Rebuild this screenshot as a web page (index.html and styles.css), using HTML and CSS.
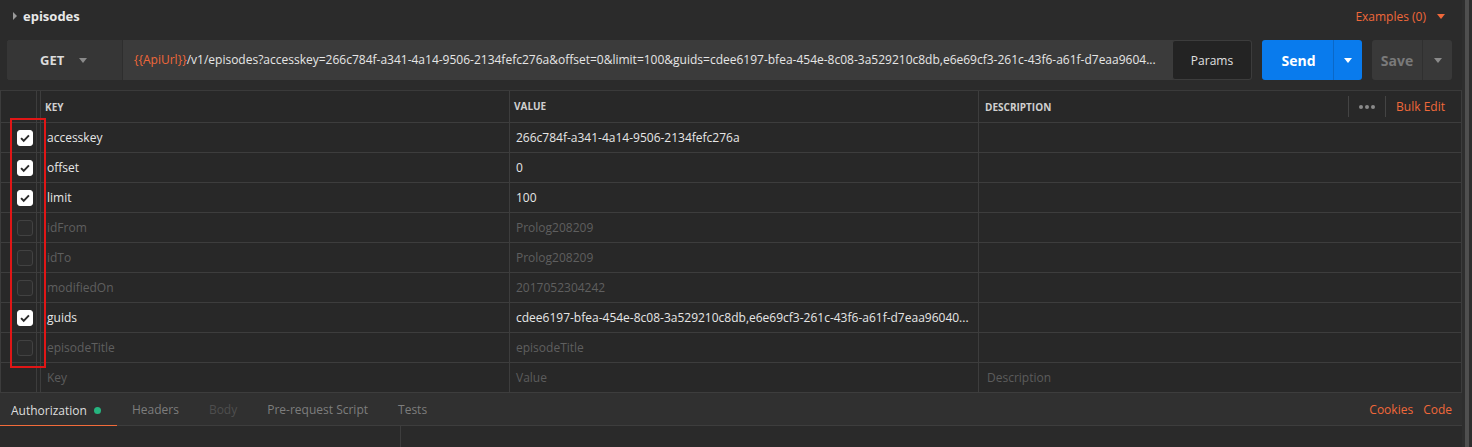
FILE: index.html
```html
<!DOCTYPE html>
<html>
<head>
  <title>episodes</title>
  <link rel="stylesheet" href="styles.css">
</head>
<body>
  <div class="app">
    <div class="main">
      <!-- Request name -->
      <div class="title-row">
        <span class="caret-right"></span>
        <span class="req-name">episodes</span>
        <span class="examples">Examples (0) <span class="caret-down orange"></span></span>
      </div>

      <!-- URL bar -->
      <div class="request-bar">
        <div class="url-group">
          <div class="method">GET <span class="caret-down grey"></span></div>
          <div class="url"><span class="var">{{ApiUrl}}</span>/v1/episodes?accesskey=266c784f-a341-4a14-9506-2134fefc276a&amp;offset=0&amp;limit=100&amp;guids=cdee6197-bfea-454e-8c08-3a529210c8db,e6e69cf3-261c-43f6-a61f-d7eaa9604...</div>
          <div class="params-btn">Params</div>
        </div>
        <div class="split-btn send">
          <span class="label">Send</span>
          <span class="arrow"><span class="caret-down white"></span></span>
        </div>
        <div class="split-btn save">
          <span class="label">Save</span>
          <span class="arrow"><span class="caret-down grey"></span></span>
        </div>
      </div>

      <!-- Params table -->
      <div class="params">
        <div class="row head">
          <div class="chk"></div>
          <div class="cell key">Key</div>
          <div class="cell val">Value</div>
          <div class="cell desc">
            <span>Description</span>
            <span class="head-tools">
              <span class="sep"></span>
              <span class="dots"><i></i><i></i><i></i></span>
              <span class="sep"></span>
              <span class="bulk">Bulk Edit</span>
            </span>
          </div>
        </div>

        <div class="row">
          <div class="chk"><span class="box on"><svg viewBox="0 0 16 16"><path d="M3.5 8.2l3 3 6-6.2" /></svg></span></div>
          <div class="cell key">accesskey</div>
          <div class="cell val">266c784f-a341-4a14-9506-2134fefc276a</div>
          <div class="cell desc"></div>
        </div>
        <div class="row">
          <div class="chk"><span class="box on"><svg viewBox="0 0 16 16"><path d="M3.5 8.2l3 3 6-6.2" /></svg></span></div>
          <div class="cell key">offset</div>
          <div class="cell val">0</div>
          <div class="cell desc"></div>
        </div>
        <div class="row">
          <div class="chk"><span class="box on"><svg viewBox="0 0 16 16"><path d="M3.5 8.2l3 3 6-6.2" /></svg></span></div>
          <div class="cell key">limit</div>
          <div class="cell val">100</div>
          <div class="cell desc"></div>
        </div>
        <div class="row off">
          <div class="chk"><span class="box"></span></div>
          <div class="cell key">idFrom</div>
          <div class="cell val">Prolog208209</div>
          <div class="cell desc"></div>
        </div>
        <div class="row off">
          <div class="chk"><span class="box"></span></div>
          <div class="cell key">idTo</div>
          <div class="cell val">Prolog208209</div>
          <div class="cell desc"></div>
        </div>
        <div class="row off">
          <div class="chk"><span class="box"></span></div>
          <div class="cell key">modifiedOn</div>
          <div class="cell val">2017052304242</div>
          <div class="cell desc"></div>
        </div>
        <div class="row">
          <div class="chk"><span class="box on"><svg viewBox="0 0 16 16"><path d="M3.5 8.2l3 3 6-6.2" /></svg></span></div>
          <div class="cell key">guids</div>
          <div class="cell val">cdee6197-bfea-454e-8c08-3a529210c8db,e6e69cf3-261c-43f6-a61f-d7eaa96040...</div>
          <div class="cell desc"></div>
        </div>
        <div class="row off">
          <div class="chk"><span class="box"></span></div>
          <div class="cell key">episodeTitle</div>
          <div class="cell val">episodeTitle</div>
          <div class="cell desc"></div>
        </div>
        <div class="row new">
          <div class="chk"></div>
          <div class="cell key">Key</div>
          <div class="cell val">Value</div>
          <div class="cell desc">Description</div>
        </div>

        <!-- annotation box drawn over the checkboxes -->
        <div class="highlight"></div>
      </div>

      <!-- Request tabs -->
      <div class="tabs">
        <span class="tab active">Authorization <span class="dot"></span></span>
        <span class="tab">Headers</span>
        <span class="tab dim">Body</span>
        <span class="tab">Pre-request Script</span>
        <span class="tab">Tests</span>
        <span class="tab-links">
          <span>Cookies</span>
          <span>Code</span>
        </span>
      </div>

      <div class="response">
        <div class="pane left"></div>
        <div class="pane"></div>
      </div>
    </div>
    <div class="scrollbar"><div class="thumb"></div></div>
  </div>
</body>
</html>
```

FILE: styles.css
```css
body {
  margin: 0;
  background-color: #2b2b2b;
  font-family: "Open Sans", "Noto Sans", sans-serif;
  font-size: 12px;
  color: #e6e6e6;
}

.app {
  display: flex;
  width: 1472px;
  height: 447px;
  overflow: hidden;
}

.main {
  width: 1462px;
  display: flex;
  flex-direction: column;
}

.scrollbar {
  flex: 1;
  background-color: #2e2e2e;
  padding-left: 3px;
}

.scrollbar .thumb {
  width: 4px;
  height: 100%;
  background-color: #4f4f4f;
}

/* title row */
.title-row {
  height: 32px;
  display: flex;
  align-items: center;
  padding-left: 13px;
  padding-right: 17px;
}

.caret-right {
  width: 0;
  height: 0;
  border-top: 4px solid transparent;
  border-bottom: 4px solid transparent;
  border-left: 4px solid #9a9a9a;
  margin-right: 6px;
}

.req-name {
  font-weight: bold;
  font-size: 13px;
  color: #e8e8e8;
}

.examples {
  margin-left: auto;
  color: #f0683a;
  display: flex;
  align-items: center;
}

.caret-down {
  display: inline-block;
  width: 0;
  height: 0;
  border-left: 4px solid transparent;
  border-right: 4px solid transparent;
  border-top: 5px solid #9a9a9a;
}

.caret-down.orange {
  border-top-color: #f0683a;
  margin-left: 11px;
}

.caret-down.white {
  border-top-color: #ffffff;
}

.caret-down.grey {
  border-top-color: #8a8a8a;
}

/* url bar */
.request-bar {
  display: flex;
  height: 40px;
  margin-top: 8px;
  padding-left: 7px;
}

.url-group {
  display: flex;
  width: 1245px;
  background-color: #3b3b3b;
  border-radius: 3px;
  overflow: hidden;
}

.method {
  width: 116px;
  box-sizing: border-box;
  padding-left: 33px;
  display: flex;
  align-items: center;
  font-weight: bold;
  font-size: 13px;
  color: #dcdcdc;
  background-color: #363636;
  border-right: 1px solid #2e2e2e;
}

.method .caret-down {
  margin-left: 15px;
}

.url {
  flex: 1;
  min-width: 0;
  padding: 0 11px;
  line-height: 40px;
  white-space: nowrap;
  overflow: hidden;
  text-overflow: ellipsis;
  color: #e6e6e6;
}

.url .var {
  color: #f0683a;
}

.params-btn {
  width: 80px;
  flex: none;
  margin-left: 1px;
  display: flex;
  align-items: center;
  justify-content: center;
  background-color: #232323;
  border: 1px solid #3c3c3c;
  border-radius: 3px;
  box-sizing: border-box;
  color: #e0e0e0;
}

.split-btn {
  display: flex;
  width: 100px;
  margin-left: 10px;
  border-radius: 3px;
  overflow: hidden;
}

.split-btn .label {
  width: 69px;
  display: flex;
  align-items: center;
  justify-content: center;
  font-weight: bold;
  font-size: 14px;
}

.split-btn .arrow {
  flex: 1;
  display: flex;
  align-items: center;
  justify-content: center;
}

.send {
  background-color: #097bed;
  color: #ffffff;
}

.send .label {
  border-right: 1px solid #0a68c8;
  padding-left: 2px;
}

.save {
  width: 80px;
  background-color: #393939;
  color: #7a7a7a;
}

.save .label {
  width: 50px;
  border-right: 1px solid #303030;
}

/* params table */
.params {
  position: relative;
  margin-top: 10px;
  border-left: 1px solid #3c3c3c;
  border-right: 1px solid #3c3c3c;
  border-top: 1px solid #3a3a3a;
}

.row {
  display: flex;
  height: 29px;
  border-bottom: 1px solid #3d3d3d;
  background-color: #282828;
}

.row.head {
  height: 31px;
}

.chk {
  width: 36px;
  border-right: 1px solid #3d3d3d;
  display: flex;
  align-items: center;
  padding-left: 16px;
  box-sizing: border-box;
}

.cell {
  display: flex;
  align-items: center;
  padding-left: 6px;
  box-sizing: border-box;
  border-left: 1px solid #3d3d3d;
  white-space: nowrap;
  overflow: hidden;
}

.cell.key {
  margin-left: 3px;
  width: 469px;
}

.cell.val {
  width: 469px;
  display: block;
  line-height: 29px;
  padding-right: 8px;
  text-overflow: ellipsis;
}

.cell.desc {
  flex: 1;
  padding-left: 8px;
}

.head .cell {
  font-size: 10px;
  font-weight: bold;
  text-transform: uppercase;
  color: #d0d0d0;
  padding-left: 4px;
}

.head .cell.desc {
  padding-left: 6px;
}

.head .cell.val {
  line-height: 31px;
}

.head-tools {
  margin-left: auto;
  display: flex;
  align-items: center;
  text-transform: none;
}

.head-tools .sep {
  width: 1px;
  height: 21px;
  background-color: #444444;
}

.head-tools .dots {
  display: flex;
  gap: 2px;
  padding: 0 10px 0 10px;
}

.head-tools .dots i {
  width: 4px;
  height: 4px;
  border-radius: 50%;
  background-color: #8a8a8a;
}

.head-tools .bulk {
  color: #f0683a;
  font-size: 12px;
  font-weight: normal;
  padding: 0 16px 0 10px;
}

.box {
  width: 16px;
  height: 16px;
  border-radius: 3px;
  border: 1px solid #424242;
  background-color: #2c2c2c;
  box-sizing: border-box;
  display: flex;
}

.box.on {
  background-color: #ffffff;
  border-color: #ffffff;
}

.box svg {
  width: 14px;
  height: 14px;
  fill: none;
  stroke: #2b2b2b;
  stroke-width: 2.2;
}

.row.off .cell {
  color: #5f5f5f;
}

.row.new .cell {
  color: #5c5c5c;
}

.highlight {
  position: absolute;
  left: 9px;
  top: 27px;
  width: 32px;
  height: 246px;
  border: 2px solid #e01616;
}

/* tabs */
.tabs {
  height: 32px;
  display: flex;
  align-items: stretch;
  background-color: #303030;
  border-bottom: 1px solid #3d3d3d;
  padding-right: 10px;
}

.tab {
  display: flex;
  align-items: center;
  padding: 0 15px;
  color: #7d7d7d;
}

.tab.active {
  color: #dedede;
  padding: 3px 16px 0 11px;
  height: 29px;
  border-bottom: 3px solid #f26b3a;
}

.tab.dim {
  color: #4e4e4e;
}

.dot {
  width: 7px;
  height: 7px;
  border-radius: 50%;
  background-color: #26b47f;
  margin-left: 7px;
}

.tab-links {
  margin-left: auto;
  display: flex;
  align-items: center;
  gap: 10px;
  color: #f0683a;
}

.response {
  flex: 1;
  display: flex;
  background-color: #2a2a2a;
}

.pane {
  flex: 1;
}

.pane.left {
  flex: none;
  width: 400px;
  border-right: 1px solid #3d3d3d;
}
```
